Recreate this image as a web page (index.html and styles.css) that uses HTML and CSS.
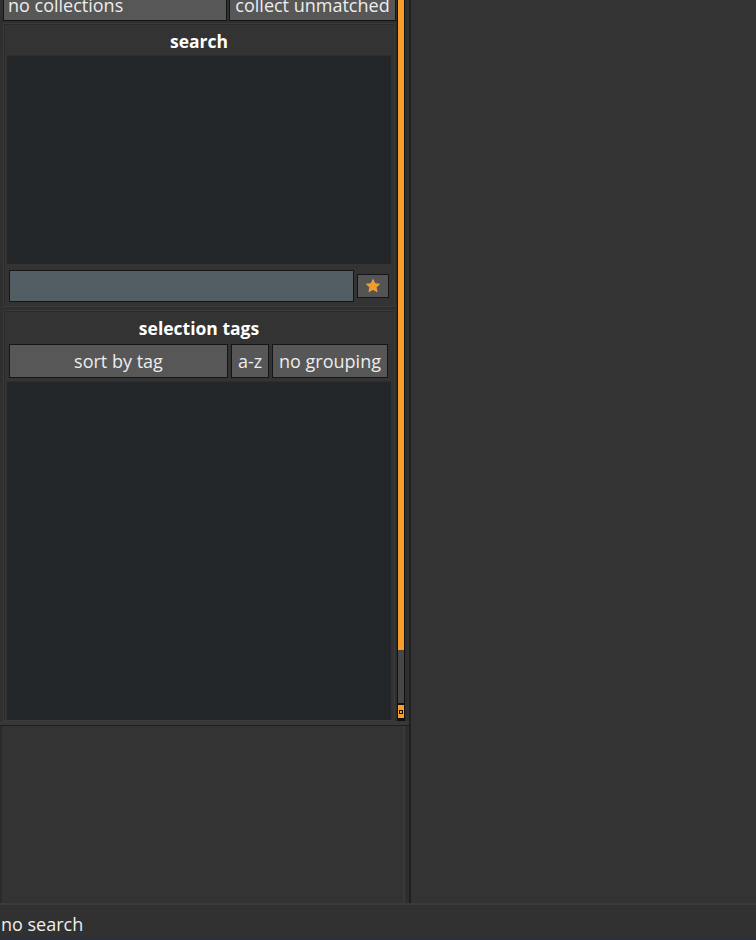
FILE: index.html
```html
<!DOCTYPE html>
<html>
<head>
<meta charset="utf-8">
<link rel="stylesheet" href="styles.css">
</head>
<body>
<div class="main">
  <div class="left">
    <div class="upper">
      <div class="content">
        <div class="toprow">
          <div class="btn btn-coll">no collections</div>
          <div class="btn btn-unm">collect unmatched</div>
        </div>
        <div class="panel search">
          <div class="title">search</div>
          <div class="list list-search"></div>
          <div class="inputrow">
            <div class="input"></div>
            <div class="starbtn">
              <svg width="16" height="16" viewBox="0 0 24 24"><path d="M12 2.2l2.9 6.3 6.9.7-5.2 4.6 1.5 6.8L12 17.1l-6.1 3.5 1.5-6.8-5.2-4.6 6.9-.7z" fill="#f39a2c" stroke="#f6a93e" stroke-width="1.2" stroke-linejoin="round"/></svg>
            </div>
          </div>
        </div>
        <div class="panel tags">
          <div class="title">selection tags</div>
          <div class="btnrow">
            <div class="btn b-sort">sort by tag</div>
            <div class="btn b-az">a-z</div>
            <div class="btn b-group">no grouping</div>
          </div>
          <div class="list list-tags"></div>
        </div>
      </div>
      <div class="scrollbar">
        <div class="sb-track">
          <div class="sb-thumb"></div>
          <div class="sb-rest"></div>
        </div>
        <div class="sb-end"><div class="sb-dot"></div></div>
      </div>
      <div class="gutter"></div>
    </div>
    <div class="sep"></div>
    <div class="lower"></div>
  </div>
  <div class="divider"></div>
  <div class="right"></div>
</div>
<div class="status">no search</div>
<div class="bottomline"></div>
</body>
</html>
```
FILE: styles.css
```css
html, body {
  margin: 0;
  padding: 0;
}
body {
  width: 756px;
  height: 940px;
  overflow: hidden;
  background: #333333;
  font-family: "Open Sans", "Noto Sans", sans-serif;
  color: #ececec;
  display: flex;
  flex-direction: column;
}
.main {
  display: flex;
  height: 903px;
  flex: none;
}
.left {
  width: 409px;
  display: flex;
  flex-direction: column;
  background: #2e2e2e;
}
.upper {
  display: flex;
  height: 721px;
  flex: none;
}
.content {
  width: 397px;
  display: flex;
  flex-direction: column;
  background: #2f2f2f;
}
.toprow {
  display: flex;
  height: 21px;
  padding-left: 3px;
  gap: 2px;
  overflow: hidden;
  align-items: flex-end;
  flex: none;
}
.btn {
  background: #575757;
  border: 1px solid #151515;
  box-sizing: border-box;
  display: flex;
  align-items: center;
  justify-content: center;
  font-size: 18px;
  color: #ededed;
  white-space: nowrap;
}
.toprow .btn {
  height: 32px;
  flex: none;
}
.btn-coll {
  width: 224px;
  justify-content: flex-start;
  padding-left: 4px;
}
.btn-unm {
  width: 167px;
}
.panel {
  margin: 2px 2px 0 3px;
  border: 1px solid #3a3a3a;
  box-shadow: inset 1px 1px 0 #2a2a2a;
  background: #333333;
  padding: 0 3px;
  display: flex;
  flex-direction: column;
}
.title {
  font-weight: 700;
  font-size: 17.5px;
  color: #ffffff;
  text-align: center;
  display: flex;
  align-items: center;
  justify-content: center;
  box-sizing: border-box;
  padding-top: 3px;
}
.search .title {
  height: 31px;
}
.list {
  background: #23272a;
  border-top: 1px solid #2a2e31;
}
.list-search {
  height: 208px;
}
.inputrow {
  display: flex;
  align-items: center;
  height: 32px;
  margin-top: 6px;
  margin-bottom: 4px;
  padding: 0 2px;
  gap: 3px;
}
.input {
  width: 346px;
  height: 32px;
  box-sizing: border-box;
  background: #535e64;
  border: 1px solid #151515;
}
.starbtn {
  width: 32px;
  height: 24px;
  box-sizing: border-box;
  background: #545454;
  border: 1px solid #151515;
  display: flex;
  align-items: center;
  justify-content: center;
}
.tags {
  margin-top: 3px;
  flex: 1;
}
.tags .title {
  height: 33px;
  padding-top: 1px;
}
.btnrow {
  display: flex;
  height: 34px;
  padding: 0 2px;
  gap: 3px;
}
.btnrow .btn {
  height: 34px;
}
.b-sort { width: 219px; }
.b-az { width: 38px; }
.b-group { width: 116px; }
.list-tags {
  flex: 1;
  margin-top: 3px;
}
.scrollbar {
  width: 8px;
  display: flex;
  flex-direction: column;
  background: #111;
  box-sizing: border-box;
  padding: 0 1px;
}
.sb-track {
  height: 703px;
  display: flex;
  flex-direction: column;
}
.sb-thumb {
  height: 650px;
  background: #f99d2a;
}
.sb-rest {
  flex: 1;
  background: #474747;
}
.sb-end {
  margin-top: 2px;
  height: 13px;
  background: #f99d2a;
  display: flex;
  align-items: center;
  justify-content: center;
}
.sb-dot {
  width: 2px;
  height: 2px;
  border: 1px solid #111;
}
.gutter {
  width: 4px;
  background: #2f2f2f;
}
.sep {
  height: 4px;
  background: #373737;
  border-bottom: 1px solid #1f1f1f;
  flex: none;
}
.lower {
  flex: 1;
  background: #333333;
  border-left: 2px solid #2a2a2a;
  border-right: 2px solid #3a3a3a;
  margin-right: 4px;
}
.divider {
  width: 2px;
  background: #1f1f1f;
}
.right {
  flex: 1;
  background: #333333;
}
.status {
  height: 34px;
  flex: none;
  border-top: 2px solid #3b3b3b;
  box-sizing: border-box;
  background: #313131;
  font-size: 18px;
  color: #eeeeee;
  padding-left: 1px;
  display: flex;
  align-items: flex-end;
  padding-bottom: 1px;
}
.bottomline {
  height: 3px;
  background: #2b3040;
  flex: none;
}
```
